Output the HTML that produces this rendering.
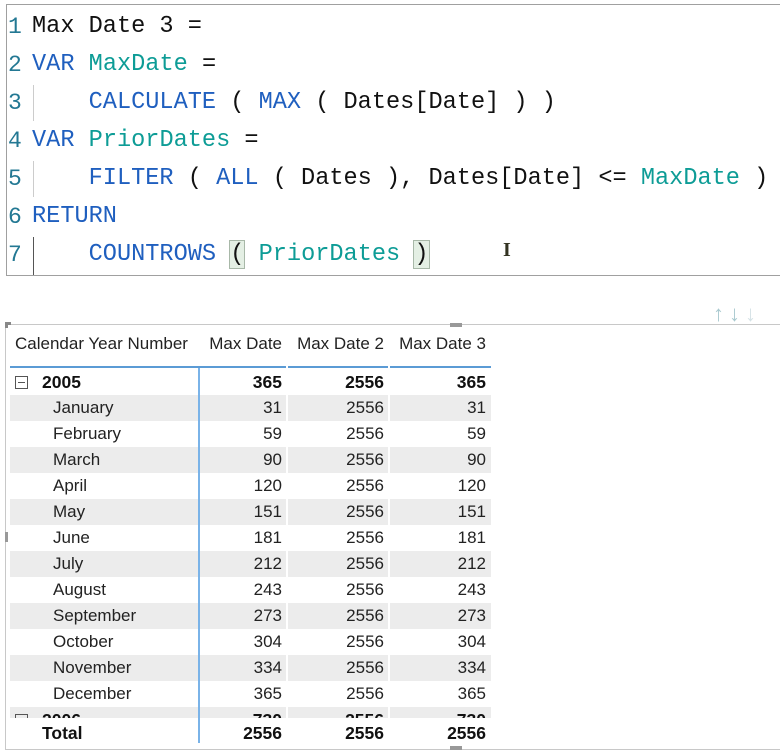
<!DOCTYPE html>
<html><head><meta charset="utf-8"><style>
body{margin:0;width:780px;height:750px;background:#fff;position:relative;overflow:hidden;font-family:"Liberation Sans",sans-serif}
#ed{position:absolute;left:6px;top:4px;width:780px;height:270px;border:1px solid #a0a0a0;border-right:none}
.ln{position:absolute;left:0;font:23.6px/38px "Liberation Mono",monospace;white-space:pre;height:38px}
.n{position:absolute;left:1px;top:0;color:#237893;font:23px/38px "Liberation Mono",monospace}
.c{position:absolute;left:25px;top:0}
.k{color:#1f5fbf}.v{color:#0d9c96}.t{color:#111}
.g{position:absolute;left:26px;width:1px;background:#ccc}
#tb{position:absolute;left:5px;top:324px;width:780px;height:424px;border-top:1px solid #c8c8c8;border-left:1px solid #c8c8c8;border-bottom:1px solid #c8c8c8}
.r{position:absolute;left:10px;width:481px;height:26px;font-size:17px;line-height:26px;color:#222}
.r span{position:absolute}
.a{right:209px}.b{right:107px}.d{right:5px}
.grey{background:#ececec}
.bold{font-weight:bold;color:#111;font-size:17.5px}
</style></head><body>
<div id="ed">
<div class="ln" style="top:3px"><span class="n">1</span><span class="c t">Max Date 3 =</span></div>
<div class="ln" style="top:41px"><span class="n">2</span><span class="c"><span class="k">VAR</span> <span class="v">MaxDate</span><span class="t"> =</span></span></div>
<div class="ln" style="top:79px"><span class="n">3</span><span class="c t">    <span class="k">CALCULATE</span> ( <span class="k">MAX</span> ( Dates[Date] ) )</span></div>
<div class="ln" style="top:117px"><span class="n">4</span><span class="c"><span class="k">VAR</span> <span class="v">PriorDates</span><span class="t"> =</span></span></div>
<div class="ln" style="top:155px"><span class="n">5</span><span class="c t">    <span class="k">FILTER</span> ( <span class="k">ALL</span> ( Dates ), Dates[Date] &lt;= <span class="v">MaxDate</span> )</span></div>
<div class="ln" style="top:193px"><span class="n">6</span><span class="c k">RETURN</span></div>
<div class="ln" style="top:231px"><span class="n">7</span><span class="c t">    <span class="k">COUNTROWS</span> <span style="background:#e4efe4;outline:1px solid #a8b8a8">(</span> <span class="v">PriorDates</span> <span style="background:#e4efe4;outline:1px solid #a8b8a8">)</span></span></div>
<div class="g" style="top:80px;height:36px"></div>
<div class="g" style="top:156px;height:36px"></div>
<div class="g" style="top:232px;height:38px;background:#555"></div>
<div style="position:absolute;left:496px;top:234px;font:bold 20px 'Liberation Serif',serif;color:#332">I</div>
</div>
<div style="position:absolute;left:713px;top:301px;font-size:22px;color:#a9c9cf;letter-spacing:5px">↑↓<span style="color:#d5e2e6">↓</span></div>
<div id="tb"></div>
<div style="position:absolute;left:5px;top:322px;width:6px;height:6px;border-left:3px solid #888;border-top:3px solid #888;box-sizing:border-box"></div>
<div style="position:absolute;left:450px;top:323px;width:12px;height:4px;background:#999"></div>
<div style="position:absolute;left:450px;top:746px;width:12px;height:4px;background:#999"></div>
<div style="position:absolute;left:5px;top:532px;width:3px;height:10px;background:#999"></div>
<div class="r" style="top:331px;height:34px;line-height:26px"><span style="left:5px">Calendar Year Number</span><span class="a">Max Date</span><span class="b">Max Date 2</span><span class="d">Max Date 3</span></div>
<div style="position:absolute;left:10px;top:366px;width:481px;height:2px;background:#5b9bd5"></div>
<div style="position:absolute;left:10px;top:369px;width:481px;height:349px;overflow:hidden">
<div class="r bold" style="top:0;left:0"><span style="left:5px;top:7px;width:13px;height:13px;border:1px solid #555;box-sizing:border-box"></span><span style="left:8px;top:13px;width:7px;height:1px;background:#555"></span><span style="left:32px">2005</span><span class="a">365</span><span class="b">2556</span><span class="d">365</span></div>
<div class="r grey" style="top:26px;left:0"><span style="left:43px">January</span><span class="a">31</span><span class="b">2556</span><span class="d">31</span></div>
<div class="r" style="top:52px;left:0"><span style="left:43px">February</span><span class="a">59</span><span class="b">2556</span><span class="d">59</span></div>
<div class="r grey" style="top:78px;left:0"><span style="left:43px">March</span><span class="a">90</span><span class="b">2556</span><span class="d">90</span></div>
<div class="r" style="top:104px;left:0"><span style="left:43px">April</span><span class="a">120</span><span class="b">2556</span><span class="d">120</span></div>
<div class="r grey" style="top:130px;left:0"><span style="left:43px">May</span><span class="a">151</span><span class="b">2556</span><span class="d">151</span></div>
<div class="r" style="top:156px;left:0"><span style="left:43px">June</span><span class="a">181</span><span class="b">2556</span><span class="d">181</span></div>
<div class="r grey" style="top:182px;left:0"><span style="left:43px">July</span><span class="a">212</span><span class="b">2556</span><span class="d">212</span></div>
<div class="r" style="top:208px;left:0"><span style="left:43px">August</span><span class="a">243</span><span class="b">2556</span><span class="d">243</span></div>
<div class="r grey" style="top:234px;left:0"><span style="left:43px">September</span><span class="a">273</span><span class="b">2556</span><span class="d">273</span></div>
<div class="r" style="top:260px;left:0"><span style="left:43px">October</span><span class="a">304</span><span class="b">2556</span><span class="d">304</span></div>
<div class="r grey" style="top:286px;left:0"><span style="left:43px">November</span><span class="a">334</span><span class="b">2556</span><span class="d">334</span></div>
<div class="r" style="top:312px;left:0"><span style="left:43px">December</span><span class="a">365</span><span class="b">2556</span><span class="d">365</span></div>
<div class="r grey bold" style="top:338px;left:0"><span style="left:5px;top:7px;width:13px;height:13px;border:1px solid #555;box-sizing:border-box"></span><span style="left:32px">2006</span><span class="a">730</span><span class="b">2556</span><span class="d">730</span></div>
<div style="position:absolute;left:276px;top:0;width:2px;height:349px;background:#fff"></div>
<div style="position:absolute;left:378px;top:0;width:2px;height:349px;background:#fff"></div>
</div>
<div class="r bold" style="top:720px"><span style="left:32px">Total</span><span class="a">2556</span><span class="b">2556</span><span class="d">2556</span></div>
<div style="position:absolute;left:198px;top:368px;width:2px;height:375px;background:#7ab3e8"></div>
<div style="position:absolute;left:286px;top:366px;width:2px;height:2px;background:#fff"></div>
<div style="position:absolute;left:388px;top:366px;width:2px;height:2px;background:#fff"></div>
</body></html>
